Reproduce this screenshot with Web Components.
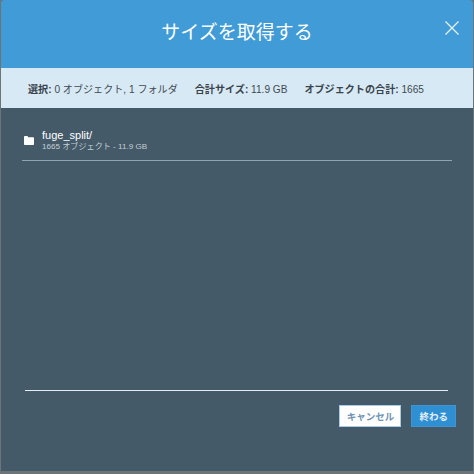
<!DOCTYPE html>
<html lang="ja">
<head>
<meta charset="utf-8">
<style>
html, body { margin: 0; height: 100%; background: #6d7478; }
body { font-family: "Liberation Sans", "Noto Sans CJK JP", sans-serif; overflow: hidden; }
</style>
</head>
<body>
<size-dialog>
  <span slot="title">サイズを取得する</span>
  <summary-item label="選択:">0 オブジェクト, 1 フォルダ</summary-item>
  <summary-item label="合計サイズ:">11.9 GB</summary-item>
  <summary-item label="オブジェクトの合計:">1665</summary-item>
  <folder-row slot="list" name="fuge_split/" detail="1665 オブジェクト - 11.9 GB"></folder-row>
  <dialog-button slot="actions">キャンセル</dialog-button>
  <dialog-button slot="actions" primary>終わる</dialog-button>
</size-dialog>
<script>
const sizeDialogTemplate = document.createElement('template');
sizeDialogTemplate.innerHTML = `
<style>
:host {
  display: flex;
  flex-direction: column;
  width: 472px;
  height: 471px;
  margin-left: 1px;
  background: #455a69;
  border-radius: 3px 3px 0 0;
  overflow: hidden;
}
header {
  height: 68px;
  flex: none;
  box-sizing: border-box;
  background: #419bd6;
  color: #fff;
  display: flex;
  align-items: center;
  justify-content: center;
  position: relative;
  font-size: 19px;
  padding-bottom: 8px;
}
.close {
  position: absolute;
  top: 18px;
  right: 11px;
  width: 20px;
  height: 20px;
}
.summary {
  height: 40px;
  flex: none;
  box-sizing: border-box;
  background: #d7e9f5;
  display: flex;
  align-items: center;
  gap: 17px;
  padding: 0 0 0 27px;
  font-size: 10.1px;
  color: #3f4a52;
}
.list {
  flex: none;
  height: 282px;
  box-sizing: border-box;
  padding: 21px 21px 0 21px;
}
.rule {
  flex: none;
  height: 1px;
  margin: 0 25px 0 24px;
  background: #e4eef4;
}
.actions {
  display: flex;
  justify-content: flex-end;
  gap: 10px;
  padding: 14px 17px 0 0;
}
</style>
<header><slot name="title"></slot>
  <svg class="close" viewBox="0 0 20 20" fill="none" stroke="#e6f2fa" stroke-width="1.3"><path d="M3.5 3.5 L16.5 16.5 M16.5 3.5 L3.5 16.5"/></svg>
</header>
<div class="summary"><slot></slot></div>
<div class="list"><slot name="list"></slot></div>
<div class="rule"></div>
<div class="actions"><slot name="actions"></slot></div>
`;

class SizeDialog extends HTMLElement {
    constructor() {
        super();
        this.attachShadow({mode: 'open'});
        this.shadowRoot.appendChild(sizeDialogTemplate.content.cloneNode(true));
    }
}
customElements.define('size-dialog', SizeDialog);

class SummaryItem extends HTMLElement {
    constructor() {
        super();
        this.attachShadow({mode: 'open'});
        this.shadowRoot.innerHTML = `
<style>
:host { display: block; white-space: nowrap; }
b { font-weight: bold; color: #39444c; }
</style>
<b></b> <slot></slot>`;
        this.shadowRoot.querySelector('b').textContent = this.getAttribute('label');
    }
}
customElements.define('summary-item', SummaryItem);

class FolderRow extends HTMLElement {
    constructor() {
        super();
        this.attachShadow({mode: 'open'});
        this.shadowRoot.innerHTML = `
<style>
:host {
  display: flex;
  align-items: flex-start;
  gap: 8px;
  height: 32px;
  box-sizing: border-box;
  padding-left: 2px;
  border-bottom: 1px solid #8fa3b0;
}
svg { width: 10px; height: 9px; flex: none; margin-top: 7px; }
.name { color: #fff; font-size: 11px; line-height: 12px; }
.detail { color: #c3ced6; font-size: 8.1px; line-height: 11px; }
</style>
<svg viewBox="0 0 10 9"><path fill="#fff" d="M0 1.2 C0 .5 .4 0 1 0 H3.4 L4.4 1.2 H9 C9.6 1.2 10 1.6 10 2.2 V8 C10 8.6 9.6 9 9 9 H1 C.4 9 0 8.6 0 8 Z"/></svg>
<div><div class="name"></div><div class="detail"></div></div>`;
        this.shadowRoot.querySelector('.name').textContent = this.getAttribute('name');
        this.shadowRoot.querySelector('.detail').textContent = this.getAttribute('detail');
    }
}
customElements.define('folder-row', FolderRow);

class DialogButton extends HTMLElement {
    constructor() {
        super();
        this.attachShadow({mode: 'open'});
        this.shadowRoot.innerHTML = `
<style>
:host {
  display: flex;
  align-items: center;
  justify-content: center;
  box-sizing: border-box;
  height: 22px;
  padding: 0 6.25px;
  background: #fff;
  color: #6f93b3;
  border: 1px solid #a9cbe4;
  font-size: 9.5px;
  font-weight: bold;
}
:host([primary]) {
  padding: 0 7px;
  background: #2f8fd3;
  border-color: #3f94d2;
  color: #e4f0f8;
}
</style>
<slot></slot>`;
    }
}
customElements.define('dialog-button', DialogButton);
</script>
</body>
</html>
